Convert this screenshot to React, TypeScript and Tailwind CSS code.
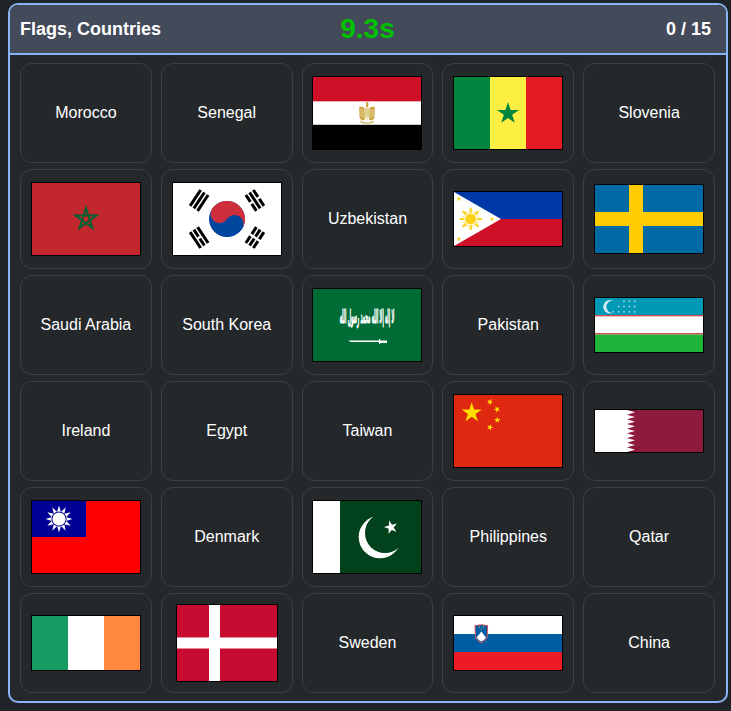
import React from "react";

const star = (cx: number, cy: number, r: number, rot = 0, inner = 0.382) => {
  const p: string[] = [];
  for (let i = 0; i < 10; i++) {
    const a = ((-90 + rot + i * 36) * Math.PI) / 180;
    const R = i % 2 ? r * inner : r;
    p.push(`${(cx + R * Math.cos(a)).toFixed(2)},${(cy + R * Math.sin(a)).toFixed(2)}`);
  }
  return p.join(" ");
};

const pentagram = (cx: number, cy: number, r: number) => {
  const p: string[] = [];
  for (let i = 0; i < 5; i++) {
    const a = ((-90 + i * 144) * Math.PI) / 180;
    p.push(`${(cx + r * Math.cos(a)).toFixed(2)},${(cy + r * Math.sin(a)).toFixed(2)}`);
  }
  return p.join(" ");
};

function Frame({ w, h, children }: { w: number; h: number; children: React.ReactNode }) {
  return (
    <div className="border border-black bg-white shrink-0" style={{ width: w + 2, height: h + 2 }}>
      <svg width={w} height={h} viewBox={`0 0 ${w} ${h}`} className="block">
        {children}
      </svg>
    </div>
  );
}

const Egypt = () => (
  <Frame w={108} h={72}>
    <rect width="108" height="24" fill="#ce1126" />
    <rect y="24" width="108" height="24" fill="#fff" />
    <rect y="24" width="108" height="0.8" fill="#ef9aa6" />
    <rect y="47.2" width="108" height="1" fill="#bdbdbd" />
    <rect y="48" width="108" height="24" fill="#000" />
    <path d="M53 25.2h2.2l.3 2.4-.6 2.6h-2.2l.3-2.6z" fill="#c9a441" />
    <path d="M46.2 30Q49 29 51.6 31L51.8 43Q48.6 44 46.6 41Z" fill="#c9a441" />
    <path d="M61.8 30Q59 29 56.4 31L56.2 43Q59.4 44 61.4 41Z" fill="#c9a441" />
    <path d="M48 32v8M49.8 32v9M58.2 32v9M60 32v8" stroke="#ecdca6" strokeWidth="0.7" />
    <path d="M51.4 30.6h5.2l-.3 10-2.3 2.8-2.3-2.8z" fill="#f3e6bd" />
    <path d="M52.9 31.4v8.4M55.1 31.4v8.4" stroke="#c9a441" strokeWidth="0.8" />
    <path d="M47.4 43.6Q54 47.4 60.6 43.6V45.6Q54 48 47.4 45.6Z" fill="#d3b667" />
  </Frame>
);

const Senegal = () => (
  <Frame w={108} h={72}>
    <rect width="36" height="72" fill="#00853f" />
    <rect x="36" width="36" height="72" fill="#fdef42" />
    <rect x="72" width="36" height="72" fill="#e31b23" />
    <polygon points={star(54, 36.5, 11.5)} fill="#00853f" />
  </Frame>
);

const Morocco = () => (
  <Frame w={108} h={72}>
    <rect width="108" height="72" fill="#c1272d" />
    <polygon points={pentagram(54, 36, 11)} fill="none" stroke="#006233" strokeWidth="2" />
  </Frame>
);

const Trigram = ({ angle, breaks }: { angle: number; breaks: boolean[] }) => (
  <g transform={`translate(54 36) rotate(${angle}) translate(0 -33.5)`}>
    {breaks.map((b, i) => {
      const y = -6 + i * 4.5;
      return b ? (
        <g key={i}>
          <rect x="-9.5" y={y} width="8.3" height="3" fill="#000" />
          <rect x="1.2" y={y} width="8.3" height="3" fill="#000" />
        </g>
      ) : (
        <rect key={i} x="-9.5" y={y} width="19" height="3" fill="#000" />
      );
    })}
  </g>
);

const Korea = () => (
  <Frame w={108} h={72}>
    <rect width="108" height="72" fill="#fff" />
    <Trigram angle={-56.3} breaks={[false, false, false]} />
    <Trigram angle={56.3} breaks={[true, false, true]} />
    <Trigram angle={123.7} breaks={[true, true, true]} />
    <Trigram angle={-123.7} breaks={[false, true, false]} />
    <g transform="translate(54 36) rotate(33.69)">
      <circle r="18" fill="#0047a0" />
      <path d="M-18 0A18 18 0 0 1 18 0Z" fill="#cd2e3a" />
      <circle cx="-9" r="9" fill="#cd2e3a" />
      <circle cx="9" r="9" fill="#0047a0" />
    </g>
  </Frame>
);

const Philippines = () => {
  const rays = [0, 45, 90, 135, 180, 225, 270, 315];
  return (
    <Frame w={108} h={54}>
      <rect width="108" height="27" fill="#0038a8" />
      <rect y="27" width="108" height="27" fill="#ce1126" />
      <polygon points="0,0 47,27 0,54" fill="#fff" />
      {rays.map((a) => (
        <g key={a} transform={`translate(16.7 27) rotate(${a})`}>
          <path d="M-1.1 -6.2L-1.1 -10.6L0 -11.6L1.1 -10.6L1.1 -6.2Z" fill="#fcd116" />
          <path d="M-2.8 -6L-2.2 -9.6L-1.6 -6Z" fill="#fde98a" />
          <path d="M1.6 -6L2.2 -9.6L2.8 -6Z" fill="#fde98a" />
        </g>
      ))}
      <circle cx="16.7" cy="27" r="5.4" fill="#fcd116" />
      <polygon points={star(4.7, 7, 2.6)} fill="#fcd116" />
      <polygon points={star(38, 27, 2.6)} fill="#fcd116" />
      <polygon points={star(4.7, 47, 2.6)} fill="#fcd116" />
    </Frame>
  );
};

const Sweden = () => (
  <Frame w={108} h={68}>
    <rect width="108" height="68" fill="#006aa7" />
    <rect x="34" width="14" height="68" fill="#fecc00" />
    <rect y="27" width="108" height="14" fill="#fecc00" />
  </Frame>
);

const Saudi = () => (
  <Frame w={108} h={72}>
    <rect width="108" height="72" fill="#006c35" />
    <g transform="translate(54 34) scale(1 5)">
      <text
        x="0"
        y="0"
        textAnchor="middle"
        fill="#fff"
        stroke="#fff"
        strokeWidth="0.2"
        fontFamily="'DejaVu Sans', sans-serif"
        fontWeight="bold"
        fontSize="3.8"
        direction="rtl"
      >
        لا إله إلا الله محمد رسول الله
      </text>
    </g>
    <path d="M35 51.6H66V53H38zM66 50h1.2v1.6H74V54H67.2v1H66z" fill="#fff" />
  </Frame>
);

const Uzbekistan = () => {
  const rows: [number, number[]][] = [
    [3.2, [29, 34.3, 39.7]],
    [8.5, [23.7, 29, 34.3, 39.7]],
    [13.8, [18.3, 23.7, 29, 34.3, 39.7]],
  ];
  return (
    <Frame w={108} h={54}>
      <rect width="108" height="17" fill="#0099b5" />
      <rect y="17" width="108" height="1.6" fill="#ce4a55" />
      <rect y="18.6" width="108" height="16.4" fill="#fff" />
      <rect y="35" width="108" height="1.6" fill="#ce4a55" />
      <rect y="36.6" width="108" height="17.4" fill="#1eb53a" />
      <circle cx="15" cy="8.8" r="6.8" fill="#d5eef3" />
      <circle cx="17.6" cy="8.8" r="6.2" fill="#0099b5" />
      {rows.map(([y, xs]) =>
        xs.map((x) => <circle key={`${x}-${y}`} cx={x} cy={y} r="0.95" fill="#8fd4df" />),
      )}
    </Frame>
  );
};

const China = () => (
  <Frame w={108} h={72}>
    <rect width="108" height="72" fill="#de2910" />
    <polygon points={star(17.7, 17.8, 10.5)} fill="#ffde00" />
    <polygon points={star(36, 7, 3.4, 23)} fill="#ffde00" />
    <polygon points={star(43, 14.3, 3.4, 46)} fill="#ffde00" />
    <polygon points={star(43.3, 25, 3.4, 0)} fill="#ffde00" />
    <polygon points={star(36, 32.3, 3.4, 21)} fill="#ffde00" />
  </Frame>
);

const Qatar = () => {
  const n = 9;
  const s = 42 / n;
  let d = "M108 0H32";
  for (let i = 0; i < n; i++) {
    d += `L40 ${(i * s + s / 2).toFixed(2)}L32 ${((i + 1) * s).toFixed(2)}`;
  }
  d += "H108Z";
  return (
    <Frame w={108} h={42}>
      <rect width="108" height="42" fill="#fff" />
      <path d={d} fill="#8d1b3d" />
    </Frame>
  );
};

const Taiwan = () => (
  <Frame w={108} h={72}>
    <rect width="108" height="72" fill="#fe0000" />
    <rect width="54" height="36" fill="#000095" />
    {Array.from({ length: 12 }).map((_, i) => (
      <g key={i} transform={`translate(27 18) rotate(${i * 30})`}>
        <path d="M-1.9 -7L0 -13.5L1.9 -7Z" fill="#fff" />
      </g>
    ))}
    <circle cx="27" cy="18" r="7.6" fill="#000095" />
    <circle cx="27" cy="18" r="6.6" fill="#fff" />
  </Frame>
);

const Pakistan = () => (
  <Frame w={108} h={72}>
    <rect width="108" height="72" fill="#01411c" />
    <rect width="27" height="72" fill="#fff" />
    <circle cx="67" cy="36" r="21.3" fill="#fff" />
    <circle cx="72" cy="32" r="20" fill="#01411c" />
    <polygon points={star(78, 26.3, 7, -15)} fill="#fff" />
  </Frame>
);

const Ireland = () => (
  <Frame w={108} h={54}>
    <rect width="36" height="54" fill="#169b62" />
    <rect x="36" width="36" height="54" fill="#fff" />
    <rect x="72" width="36" height="54" fill="#ff883e" />
  </Frame>
);

const Denmark = () => (
  <Frame w={100} h={76}>
    <rect width="100" height="76" fill="#c60c30" />
    <rect x="32" width="11" height="76" fill="#fff" />
    <rect y="32.5" width="100" height="11" fill="#fff" />
  </Frame>
);

const Slovenia = () => (
  <Frame w={108} h={54}>
    <rect width="108" height="18" fill="#fff" />
    <rect y="18" width="108" height="18" fill="#005da4" />
    <rect y="36" width="108" height="18" fill="#ed1c24" />
    <path d="M21 9.6Q27.3 8 33.6 9.6L33.2 21Q32 25 27.3 27 22.6 25 21.4 21Z" fill="#005da4" stroke="#d5555c" strokeWidth="1" />
    <path d="M22.6 21.5L25.5 18 27.3 15.5 29.2 18 32 21.5Q30 24.5 27.3 25.6 24.6 24.5 22.6 21.5Z" fill="#fff" />
    <circle cx="25.2" cy="11.2" r="0.6" fill="#e8d24a" />
    <circle cx="29.4" cy="11.2" r="0.6" fill="#e8d24a" />
    <circle cx="27.3" cy="13" r="0.6" fill="#e8d24a" />
  </Frame>
);

const Label = ({ t }: { t: string }) => <span className="text-white text-base">{t}</span>;

const cells: React.ReactNode[] = [
  <Label t="Morocco" />,
  <Label t="Senegal" />,
  <Egypt />,
  <Senegal />,
  <Label t="Slovenia" />,
  <Morocco />,
  <Korea />,
  <Label t="Uzbekistan" />,
  <Philippines />,
  <Sweden />,
  <Label t="Saudi Arabia" />,
  <Label t="South Korea" />,
  <Saudi />,
  <Label t="Pakistan" />,
  <Uzbekistan />,
  <Label t="Ireland" />,
  <Label t="Egypt" />,
  <Label t="Taiwan" />,
  <China />,
  <Qatar />,
  <Taiwan />,
  <Label t="Denmark" />,
  <Pakistan />,
  <Label t="Philippines" />,
  <Label t="Qatar" />,
  <Ireland />,
  <Denmark />,
  <Label t="Sweden" />,
  <Slovenia />,
  <Label t="China" />,
];

export default function App() {
  return (
    <div className="w-[731px] h-[711px] bg-[#202327] pt-[3px] pl-2 font-['Liberation_Sans',Arial,sans-serif]">
      <div className="w-[720px] h-[700px] rounded-[10px] border-2 border-[#8ab4f8] bg-[#24282b] overflow-hidden">
        <div className="h-[50px] grid grid-cols-3 items-center border-b-2 border-[#8ab4f8] bg-[#434a5a] pl-[10px] pr-[11px]">
          <div className="text-white text-lg font-bold whitespace-nowrap">Flags, Countries</div>
          <div className="text-center text-[#00c000] text-[28px] leading-none font-bold">9.3s</div>
          <div className="text-right text-white text-lg font-bold pr-1">0 / 15</div>
        </div>
        <div className="grid grid-cols-5 gap-x-[9px] gap-y-[6px] pt-2 pl-[10px] pr-[11px]">
          {cells.map((c, i) => (
            <div
              key={i}
              className="h-[100px] flex items-center justify-center rounded-[12px] border border-[#3a3f4c] bg-[#24282b]"
            >
              {c}
            </div>
          ))}
        </div>
      </div>
    </div>
  );
}
